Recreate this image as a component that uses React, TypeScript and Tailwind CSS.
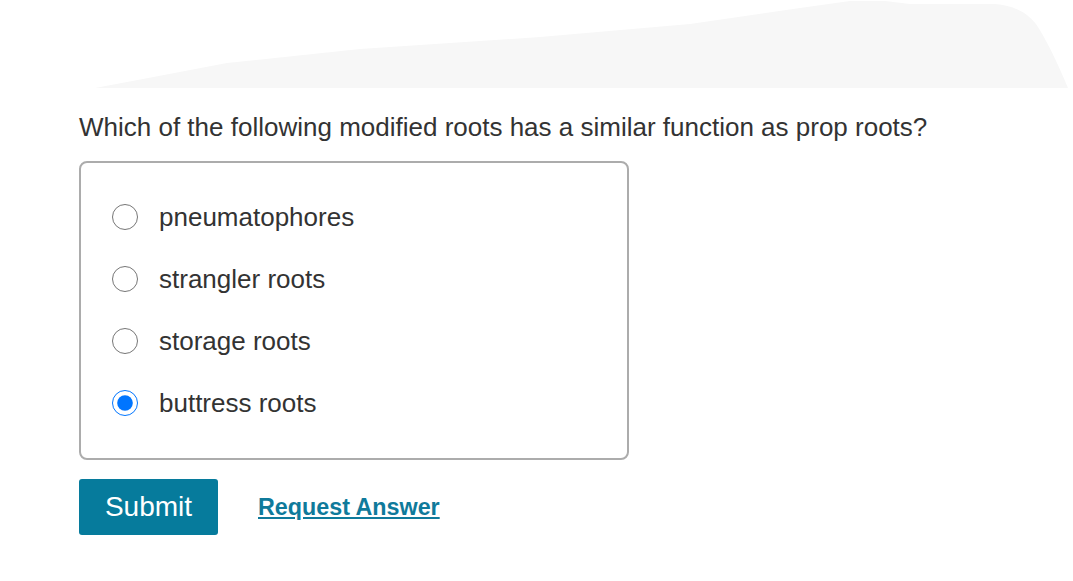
import { useState } from "react";

const options = ["pneumatophores", "strangler roots", "storage roots", "buttress roots"];

export default function App() {
    const [selected, setSelected] = useState<string>("buttress roots");

    return (
        <div className="min-h-screen bg-white font-['Liberation_Sans',Arial,sans-serif] text-[#333]">
            {/* soft grey wave at the top */}
            <svg className="block w-full h-[89px]" viewBox="0 0 1073 89" preserveAspectRatio="none">
                <path
                    d="M95 88 L143 79 L227 63 L360 49 L540 37 L690 24 L800 8 L850 1 L885 1 L910 4 L995 4 Q1022 6 1036 24 Q1050 45 1068 88 Z"
                    fill="#f7f7f7"
                />
            </svg>

            <div className="pl-[79px] pt-[23px]">
                <p className="text-[26px] leading-[30px]">
                    Which of the following modified roots has a similar function as prop roots?
                </p>

                <div className="mt-[19px] w-[550px] border-2 border-[#acacac] rounded-[8px] pl-[31px] pt-[39px] pb-[40px] flex flex-col gap-[32px]">
                    {options.map((opt) => (
                        <label key={opt} className="flex items-center h-[30px] cursor-pointer">
                            <input
                                type="radio"
                                name="answer"
                                className="m-0 w-[26px] h-[26px]"
                                checked={selected === opt}
                                onChange={() => setSelected(opt)}
                            />
                            <span className="ml-[21px] text-[26px] leading-[30px]">{opt}</span>
                        </label>
                    ))}
                </div>

                <div className="mt-[19px] flex items-center">
                    <button
                        type="button"
                        className="w-[139px] h-[56px] bg-[#067b9c] rounded-[3px] text-white text-[28px]"
                    >
                        Submit
                    </button>
                    <a href="#" className="ml-[40px] text-[23.3px] font-bold underline text-[#0f7a9b]">
                        Request Answer
                    </a>
                </div>
            </div>
        </div>
    );
}
